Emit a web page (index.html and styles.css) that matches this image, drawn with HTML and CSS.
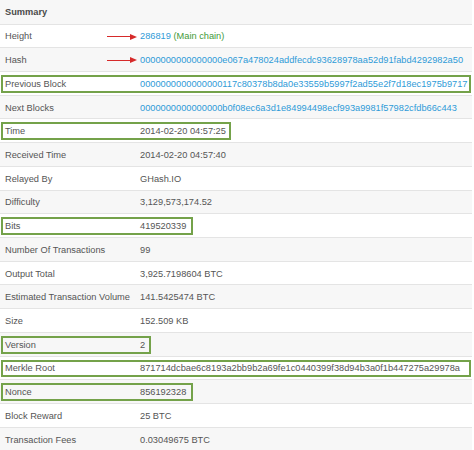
FILE: index.html
```html
<!DOCTYPE html>
<html>
<head>
<meta charset="utf-8">
<link rel="stylesheet" href="styles.css">
</head>
<body>
<div class="table">
  <div class="row head"><div class="cell label">Summary</div></div>
  <div class="row"><div class="cell label">Height</div><div class="cell"><a class="link">286819</a> <span class="main">(Main chain)</span></div><span class="arrow"></span></div>
  <div class="row"><div class="cell label">Hash</div><div class="cell"><a class="link">0000000000000000e067a478024addfecdc93628978aa52d91fabd4292982a50</a></div><span class="arrow"></span></div>
  <div class="row"><div class="cell label">Previous Block</div><div class="cell"><a class="link">0000000000000000117c80378b8da0e33559b5997f2ad55e2f7d18ec1975b9717</a></div><span class="box box-full"></span></div>
  <div class="row"><div class="cell label">Next Blocks</div><div class="cell"><a class="link">0000000000000000b0f08ec6a3d1e84994498ecf993a9981f57982cfdb66c443</a></div></div>
  <div class="row"><div class="cell label">Time</div><div class="cell">2014-02-20 04:57:25</div><span class="box box-time"></span></div>
  <div class="row"><div class="cell label">Received Time</div><div class="cell">2014-02-20 04:57:40</div></div>
  <div class="row"><div class="cell label">Relayed By</div><div class="cell">GHash.IO</div></div>
  <div class="row"><div class="cell label">Difficulty</div><div class="cell">3,129,573,174.52</div></div>
  <div class="row"><div class="cell label">Bits</div><div class="cell">419520339</div><span class="box box-num"></span></div>
  <div class="row"><div class="cell label">Number Of Transactions</div><div class="cell">99</div></div>
  <div class="row"><div class="cell label">Output Total</div><div class="cell">3,925.7198604 BTC</div></div>
  <div class="row"><div class="cell label">Estimated Transaction Volume</div><div class="cell">141.5425474 BTC</div></div>
  <div class="row"><div class="cell label">Size</div><div class="cell">152.509 KB</div></div>
  <div class="row"><div class="cell label">Version</div><div class="cell">2</div><span class="box box-ver"></span></div>
  <div class="row"><div class="cell label">Merkle Root</div><div class="cell">871714dcbae6c8193a2bb9b2a69fe1c0440399f38d94b3a0f1b447275a29978a</div><span class="box box-full"></span></div>
  <div class="row"><div class="cell label">Nonce</div><div class="cell">856192328</div><span class="box box-num"></span></div>
  <div class="row"><div class="cell label">Block Reward</div><div class="cell">25 BTC</div></div>
  <div class="row"><div class="cell label">Transaction Fees</div><div class="cell">0.03049675 BTC</div></div>
</div>
</body>
</html>
```
FILE: styles.css
```css
html, body {
  margin: 0;
  padding: 0;
  background: #ffffff;
}
body {
  font-family: "Liberation Sans", Arial, sans-serif;
  font-size: 9.25px;
  color: #555555;
}
.table {
  width: 472px;
  display: flex;
  flex-direction: column;
}
.row {
  position: relative;
  display: grid;
  grid-template-columns: 140px 1fr;
  align-items: center;
  height: 23.73px;
  box-sizing: border-box;
  border-top: 1px solid #e4e4e4;
  white-space: nowrap;
}
.row:nth-child(odd) {
  background: #f7f7f7;
}
.row.head {
  height: 23.5px;
  border-top: none;
  font-weight: bold;
  color: #4a4a4a;
}
.cell {
  padding-top: 1px;
}
.label {
  padding-left: 5px;
}
.link {
  color: #2f9bd8;
  text-decoration: none;
}
.main {
  color: #3f9a3a;
}
.arrow {
  position: absolute;
  left: 107px;
  top: 50%;
  width: 24px;
  height: 1.5px;
  background: #d62a2a;
}
.arrow::after {
  content: "";
  position: absolute;
  left: 23px;
  top: -2.25px;
  border-left: 7px solid #d62a2a;
  border-top: 3px solid transparent;
  border-bottom: 3px solid transparent;
}
.box {
  position: absolute;
  left: 1px;
  top: 3px;
  bottom: 2px;
  border: 2px solid #74a24a;
  box-sizing: border-box;
}
.box-full { width: 470px; }
.box-time { width: 230px; }
.box-num { width: 192px; }
.box-ver { width: 150px; }
```
